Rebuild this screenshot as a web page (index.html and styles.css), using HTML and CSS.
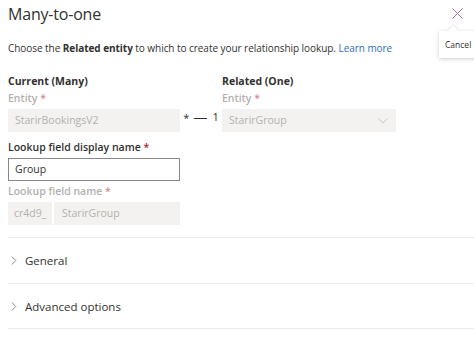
FILE: index.html
```html
<!DOCTYPE html>
<html>
<head>
<meta charset="utf-8">
<link rel="stylesheet" href="styles.css">
</head>
<body>
<div class="panel">
  <header class="head">
    <h1 class="title">Many-to-one</h1>
    <button class="close" aria-label="Cancel">
      <svg width="11" height="11" viewBox="0 0 11 11"><path d="M0.5 0.5 L10.5 10.5 M10.5 0.5 L0.5 10.5" stroke="#a56fa8" stroke-width="1" fill="none"/></svg>
    </button>
    <div class="tooltip">Cancel</div>
  </header>
  <p class="desc">Choose the <b>Related entity</b> to which to create your relationship lookup. <a class="link">Learn more</a></p>
  <div class="rel">
    <div class="col left">
      <div class="sect">Current (Many)</div>
      <div class="label dis">Entity <span class="req">*</span></div>
      <div class="field disabled">StarirBookingsV2</div>
      <div class="label">Lookup field display name <span class="req">*</span></div>
      <div class="field edit">Group</div>
      <div class="label dis">Lookup field name <span class="req">*</span></div>
      <div class="prefixrow">
        <div class="field disabled prefix">cr4d9_</div>
        <div class="field disabled grow">StarirGroup</div>
      </div>
    </div>
    <div class="conn"><span class="star">*</span><span class="dash">—</span><span>1</span></div>
    <div class="col right">
      <div class="sect">Related (One)</div>
      <div class="label dis">Entity <span class="req">*</span></div>
      <div class="field disabled select">StarirGroup
        <svg class="chev" width="10" height="6" viewBox="0 0 10 6"><path d="M0.5 0.5 L5 5 L9.5 0.5" stroke="#c8c6c4" stroke-width="1" fill="none"/></svg>
      </div>
    </div>
  </div>
  <div class="acc">
    <div class="accrow"><svg class="arr" width="6" height="9" viewBox="0 0 6 9"><path d="M0.8 0.5 L4.8 4.5 L0.8 8.5" stroke="#8a8886" stroke-width="1" fill="none"/></svg><span>General</span></div>
    <div class="accrow"><svg class="arr" width="6" height="9" viewBox="0 0 6 9"><path d="M0.8 0.5 L4.8 4.5 L0.8 8.5" stroke="#8a8886" stroke-width="1" fill="none"/></svg><span>Advanced options</span></div>
  </div>
</div>
</body>
</html>
```
FILE: styles.css
```css
* { box-sizing: border-box; }
html, body { margin: 0; padding: 0; background: #fff; }
body {
  font-family: "Open Sans", "Noto Sans", sans-serif;
  color: #323130;
  width: 474px;
  height: 361px;
  overflow: hidden;
}
.panel { padding-left: 8px; }
.head { position: relative; height: 34px; }
.title {
  margin: 0;
  padding-top: 3px;
  font-size: 16px;
  font-weight: 500;
  line-height: 22px;
  letter-spacing: -0.2px;
}
.close {
  position: absolute;
  right: 11px;
  top: 8px;
  border: 0;
  background: none;
  padding: 0;
  width: 11px;
  height: 11px;
}
.close svg { display: block; }
.tooltip {
  position: absolute;
  left: 431px;
  top: 31px;
  width: 44px;
  height: 27px;
  background: #fff;
  box-shadow: 0 1px 4px rgba(0,0,0,0.2);
  font-size: 8.5px;
  line-height: 27px;
  padding-left: 6px;
  z-index: 2;
}
.tooltip::before {
  content: "";
  position: absolute;
  left: 10px;
  top: -4px;
  width: 8px;
  height: 8px;
  background: #fff;
  transform: rotate(45deg);
  box-shadow: -1px -1px 2px rgba(0,0,0,0.1);
}
.desc {
  margin: 0;
  font-size: 10px;
  line-height: 14px;
  letter-spacing: -0.05px;
  height: 26px;
  padding-top: 7px;
}
.desc b { font-weight: 700; }
.link { color: #2f6fbf; }
.rel { display: flex; }
.col { display: flex; flex-direction: column; }
.left { width: 172px; }
.right { width: 174px; }
.conn {
  width: 42px;
  font-size: 11px;
  padding-top: 49px;
  display: flex;
  justify-content: center;
  align-items: baseline;
  gap: 3px;
  color: #323130;
}
.star { font-size: 11px; position: relative; top: 1px; }
.dash { display: inline-block; transform: scaleX(1.3); margin: 0 3px; }
.sect {
  font-size: 10.5px;
  font-weight: 700;
  line-height: 14px;
  padding-top: 14px;
  height: 28px;
}
.label {
  font-size: 10.5px;
  font-weight: 600;
  line-height: 14px;
  height: 17px;
  padding-top: 3px;
  margin-bottom: 4px;
}
.label.dis { color: #b3b0ad; }
.req { color: #a4262c; }
.label.dis .req { color: #d98b96; }
.field {
  height: 23px;
  font-size: 10.5px;
  line-height: 23px;
  padding-left: 7px;
  margin-bottom: 5px;
}
.disabled { background: #f3f2f1; color: #b3b0ad; }
.edit { border: 1px solid #8a8886; line-height: 21px; padding-left: 6px; color: #323130; margin-bottom: 0; }
.select { position: relative; }
.chev { position: absolute; right: 8px; top: 9px; }
.prefixrow { display: flex; gap: 2px; }
.prefix { width: 44px; padding-left: 6px; }
.grow { flex: 1; padding-left: 8px; }
.acc { margin-top: 7px; }
.accrow {
  border-top: 1px solid #edebe9;
  height: 46px;
  display: flex;
  align-items: center;
  font-size: 11.5px;
  color: #323130;
  padding-left: 3px;
}
.accrow:last-child { border-bottom: 1px solid #edebe9; height: 46px; }
.arr { margin-right: 8px; }
```
